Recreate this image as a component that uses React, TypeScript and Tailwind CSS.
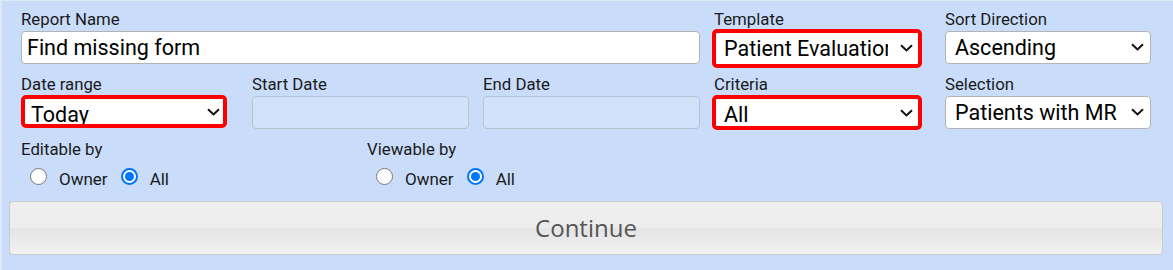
import { useState } from 'react'

const labelCls = 'block h-[18px] text-[16.8px] leading-[18px] text-[#1a1a1a] whitespace-nowrap'

function Chevron({ className }: { className: string }) {
  return (
    <svg
      className={`pointer-events-none absolute ${className}`}
      width="13"
      height="8"
      viewBox="0 0 13 8"
      fill="none"
    >
      <path d="M1 1.2 6.5 6.4 12 1.2" stroke="#111" strokeWidth="2" />
    </svg>
  )
}

function Select({
  value,
  options,
  red,
  className,
  chevron,
  pad = 'pl-[8px]',
}: {
  value: string
  options: string[]
  red?: boolean
  className: string
  chevron: string
  pad?: string
}) {
  const [v, setV] = useState(value)
  return (
    <div className={`relative ${className}`}>
      <select
        value={v}
        onChange={(e) => setV(e.target.value)}
        className={`h-full w-full appearance-none bg-white text-[21.5px] text-black outline-none ${
          red
            ? `rounded-[5px] border-4 border-[#f00] ${pad} pr-[30px]`
            : 'rounded-[4px] border border-[#b4b4b4] pl-[9px] pr-[32px]'
        }`}
      >
        {options.map((o) => (
          <option key={o}>{o}</option>
        ))}
      </select>
      <Chevron className={chevron} />
    </div>
  )
}

function Radio({ name, checked, label }: { name: string; checked?: boolean; label: string }) {
  const [on, setOn] = useState(!!checked)
  return (
    <label className="flex items-start">
      <input
        type="radio"
        name={name}
        checked={on}
        onChange={() => setOn(true)}
        className="sr-only"
      />
      {on ? (
        <span className="flex h-[17px] w-[17px] items-center justify-center rounded-full border-[2px] border-[#0075ff] bg-white">
          <span className="h-[9px] w-[9px] rounded-full bg-[#0075ff]" />
        </span>
      ) : (
        <span className="h-[17px] w-[17px] rounded-full border border-[#767676] bg-white" />
      )}
      <span className="ml-[12px] mt-[1px] text-[17px] leading-[20px] text-[#1a1a1a]">{label}</span>
    </label>
  )
}

export default function App() {
  return (
    <div
      className="h-[270px] w-full border-l-2 border-t border-[#dde8f8] bg-[#c9ddfb] pl-[19px] pt-[9px]"
      style={{ fontFamily: 'Roboto, "Liberation Sans", sans-serif' }}
    >
      {/* row 1 */}
      <div className="flex items-start">
        <div className="w-[679px]">
          <span className={labelCls}>Report Name</span>
          <input
            defaultValue="Find missing form"
            className="mt-[3px] h-[33px] w-full rounded-[4px] border border-[#b4b4b4] bg-white pl-[5px] text-[21.5px] text-black outline-none"
          />
        </div>
        <div className="ml-[12px] w-[210px]">
          <span className={`${labelCls} pl-[2px]`}>Template</span>
          <Select
            red
            value="Patient Evaluation"
            options={['Patient Evaluation', 'Visit Summary']}
            className="mt-[1px] h-[39px] w-[210px]"
            chevron="right-[9px] top-[15px]"
          />
        </div>
        <div className="ml-[23px] w-[206px]">
          <span className={labelCls}>Sort Direction</span>
          <Select
            value="Ascending"
            options={['Ascending', 'Descending']}
            className="mt-[3px] h-[33px] w-[206px]"
            chevron="right-[7px] top-[12px]"
          />
        </div>
      </div>

      {/* row 2 */}
      <div className="mt-[7px] flex items-start">
        <div className="w-[206px]">
          <span className={labelCls}>Date range</span>
          <Select
            red
            pad="pl-[6px]"
            value="Today"
            options={['Today', 'Yesterday', 'This week']}
            className="mt-[2px] h-[33px] w-[206px]"
            chevron="right-[7px] top-[13px]"
          />
        </div>
        <div className="ml-[25px] w-[217px]">
          <span className={labelCls}>Start Date</span>
          <input
            disabled
            className="mt-[3px] h-[33px] w-full rounded-[4px] border border-[#b7c3d2] bg-[#d2e2fa]"
          />
        </div>
        <div className="ml-[14px] w-[217px]">
          <span className={labelCls}>End Date</span>
          <input
            disabled
            className="mt-[3px] h-[33px] w-full rounded-[4px] border border-[#b7c3d2] bg-[#d2e2fa]"
          />
        </div>
        <div className="ml-[12px] w-[210px]">
          <span className={`${labelCls} pl-[2px]`}>Criteria</span>
          <Select
            red
            value="All"
            options={['All', 'Missing']}
            className="mt-[2px] h-[35px] w-[210px]"
            chevron="right-[9px] top-[14px]"
          />
        </div>
        <div className="ml-[23px] w-[206px]">
          <span className={labelCls}>Selection</span>
          <Select
            value="Patients with MR"
            options={['Patients with MR', 'All patients']}
            className="mt-[3px] h-[33px] w-[206px]"
            chevron="right-[7px] top-[12px]"
          />
        </div>
      </div>

      {/* row 3 */}
      <div className="mt-[10px] flex">
        <div className="w-[346px]">
          <span className={labelCls}>Editable by</span>
          <div className="mt-[10px] flex gap-[13px] pl-[9px]">
            <Radio name="edit" label="Owner" />
            <Radio name="edit" checked label="All" />
          </div>
        </div>
        <div>
          <span className={labelCls}>Viewable by</span>
          <div className="mt-[10px] flex gap-[13px] pl-[9px]">
            <Radio name="view" label="Owner" />
            <Radio name="view" checked label="All" />
          </div>
        </div>
      </div>

      <button
        type="button"
        className="-ml-[12px] mt-[12px] h-[54px] w-[1154px] rounded-[4px] border border-[#c9c9c9] bg-[linear-gradient(#efefef,#ececec_50%,#e4e4e4_52%,#f2f2f2)] text-[24px] text-[#555]"
        style={{ fontFamily: '"Open Sans", "DejaVu Sans", sans-serif' }}
      >
        Continue
      </button>
    </div>
  )
}
